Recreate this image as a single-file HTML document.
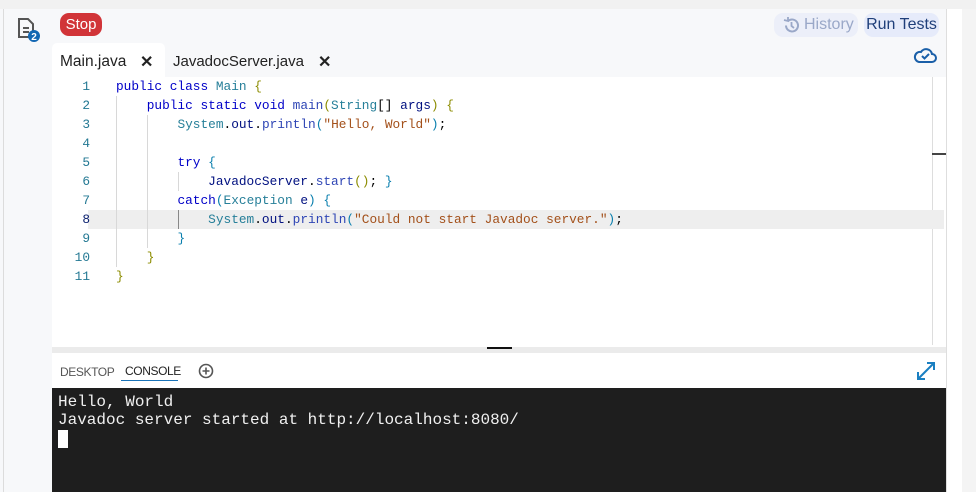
<!DOCTYPE html>
<html><head><meta charset="utf-8"><style>
*{margin:0;padding:0;box-sizing:border-box}
body{width:976px;height:492px;overflow:hidden;background:#f7f8fa;font-family:"Liberation Sans",sans-serif;position:relative}
.abs{position:absolute}
.code{font-family:"Liberation Mono",monospace;font-size:12.8px;white-space:pre;line-height:19px}
.kw{color:#0000c8}.ty{color:#267f99}.fn{color:#2f46b5}.st{color:#a3501a}.br{color:#8c8c00}.br2{color:#0a7fae}.id{color:#001080}
</style></head><body>
<div class="abs" style="left:0;top:0;width:976px;height:9px;background:#f1f1f1"></div>
<div class="abs" style="left:3px;top:9px;width:1px;height:483px;background:#dcdcdc"></div>
<div class="abs" style="left:946px;top:9px;width:1px;height:483px;background:#dedede"></div>
<div class="abs" style="left:947px;top:9px;width:15px;height:483px;background:#fff"></div>
<div class="abs" style="left:962px;top:9px;width:14px;height:483px;background:#f4f4f4"></div>
<svg class="abs" style="left:16px;top:17px" width="28" height="26" viewBox="0 0 28 26"><path d="M3 2h9l5 5v13H3z" fill="none" stroke="#555" stroke-width="2"/><path d="M7 11h6M7 15h6" stroke="#555" stroke-width="2"/><circle cx="18" cy="19" r="6" fill="#1267b3"/><text x="18" y="23" font-size="10" font-weight="bold" fill="#fff" text-anchor="middle" font-family="Liberation Sans">2</text></svg>
<div class="abs" style="left:60px;top:13px;width:42px;height:23px;background:#d13438;border-radius:9px;color:#fff;font-size:15px;line-height:23px;text-align:center">Stop</div>
<div class="abs" style="left:774px;top:13px;width:84px;height:24px;background:#eceff9;border-radius:9px;color:#9aa8c8;font-size:16px;line-height:24px;padding-left:30px">History</div>
<svg class="abs" style="left:783px;top:17px" width="17" height="17" viewBox="0 0 17 17"><path d="M3 8.5A6 6 0 1 0 5 4" fill="none" stroke="#9aa8c8" stroke-width="2"/><path d="M1 3l4 1 0-4" fill="none" stroke="#9aa8c8" stroke-width="1.8"/><path d="M8.5 5v4l2.5 2" fill="none" stroke="#9aa8c8" stroke-width="1.8"/></svg>
<div class="abs" style="left:864px;top:13px;width:75px;height:24px;background:#e6ebfa;border-radius:9px;color:#1f3f7a;font-size:16px;line-height:24px;text-align:center">Run Tests</div>
<svg class="abs" style="left:913px;top:46px" width="24" height="18" viewBox="0 0 24 18"><path d="M6 16h13a4 4 0 0 0 0-8 6 6 0 0 0-11-2 5 5 0 0 0-2 10z" fill="none" stroke="#1a5fa8" stroke-width="2"/><path d="M9 10l2.5 2.5L16 8" fill="none" stroke="#1a5fa8" stroke-width="2"/></svg>
<div class="abs" style="left:52px;top:43px;width:113px;height:36px;background:#fff;border-radius:5px 5px 0 0"></div>
<div class="abs" style="left:60px;top:53px;font-size:15.5px;color:#222">Main.java</div>
<div class="abs" style="left:140px;top:52px;font-size:16px;color:#222;font-weight:bold">✕</div>
<div class="abs" style="left:173px;top:53px;font-size:15px;color:#222">JavadocServer.java</div>
<div class="abs" style="left:318px;top:52px;font-size:16px;color:#222;font-weight:bold">✕</div>
<div class="abs" style="left:52px;top:77px;width:894px;height:270px;background:#fff"></div>
<div class="abs" style="left:932px;top:77px;width:1px;height:268px;background:#ddd"></div>
<div class="abs" style="left:932px;top:153px;width:14px;height:2px;background:#444"></div>
<div class="abs" style="left:88px;top:210px;width:856px;height:19px;background:#eeeeee"></div>
<div class="abs" style="left:116px;top:96px;width:1px;height:171px;background:#d8d8d8"></div>
<div class="abs" style="left:147px;top:115px;width:1px;height:133px;background:#d8d8d8"></div>
<div class="abs" style="left:178px;top:172px;width:1px;height:19px;background:#d8d8d8"></div>
<div class="abs" style="left:178px;top:210px;width:1px;height:19px;background:#888"></div>
<div class="abs code" style="left:60px;top:77px;width:30px;text-align:right;color:#237893">1
2
3
4
5
6
7
<span style="color:#0b216f">8</span>
9
10
11</div>
<div class="abs code" style="left:116px;top:77px;color:#000"><span class="kw">public class</span> <span class="ty">Main</span> <span class="br">{</span>
    <span class="kw">public static void</span> <span class="fn">main</span><span class="br">(</span><span class="ty">String</span>[] <span class="id">args</span><span class="br">)</span> <span class="br">{</span>
        <span class="ty">System</span>.<span class="id">out</span>.<span class="fn">println</span><span class="br2">(</span><span class="st">"Hello, World"</span><span class="br2">)</span>;

        <span class="kw">try</span> <span class="br2">{</span>
            <span class="id">JavadocServer</span>.<span class="fn">start</span><span class="br">()</span>; <span class="br2">}</span>
        <span class="kw">catch</span><span class="br2">(</span><span class="ty">Exception</span> <span class="id">e</span><span class="br2">)</span> <span class="br2">{</span>
            <span class="ty">System</span>.<span class="id">out</span>.<span class="fn">println</span><span class="br2">(</span><span class="st">"Could not start Javadoc server."</span><span class="br2">)</span>;
        <span class="br2">}</span>
    <span class="br">}</span>
<span class="br">}</span></div>
<div class="abs" style="left:52px;top:347px;width:894px;height:6px;background:#ebebeb"></div>
<div class="abs" style="left:487px;top:347px;width:25px;height:2px;background:#111"></div>
<div class="abs" style="left:52px;top:353px;width:894px;height:35px;background:#fff"></div>
<div class="abs" style="left:60px;top:365px;font-size:12px;letter-spacing:-0.4px;color:#555">DESKTOP</div>
<div class="abs" style="left:125px;top:364px;font-size:12px;letter-spacing:-0.4px;color:#222">CONSOLE</div>
<div class="abs" style="left:121px;top:380px;width:57px;height:1px;background:#1a73b8"></div>
<svg class="abs" style="left:198px;top:363px" width="16" height="16" viewBox="0 0 16 16"><circle cx="8" cy="8" r="6.5" fill="none" stroke="#555" stroke-width="1.6"/><path d="M8 4.5v7M4.5 8h7" stroke="#555" stroke-width="1.6"/></svg>
<svg class="abs" style="left:916px;top:361px" width="20" height="20" viewBox="0 0 20 20"><path d="M3 17L17 3" stroke="#1a7fc1" stroke-width="2"/><path d="M11 2h7v7" fill="none" stroke="#1a7fc1" stroke-width="2"/><path d="M2 11v7h7" fill="none" stroke="#1a7fc1" stroke-width="2"/></svg>
<div class="abs" style="left:52px;top:388px;width:894px;height:104px;background:#1e1e1e"></div>
<div class="abs" style="left:58px;top:393px;font-family:'Liberation Mono',monospace;font-size:16px;line-height:18px;color:#f0f0f0;white-space:pre">Hello, World
Javadoc server started at http://localhost:8080/</div>
<div class="abs" style="left:58px;top:430px;width:10px;height:18px;background:#fff"></div>
</body></html>
